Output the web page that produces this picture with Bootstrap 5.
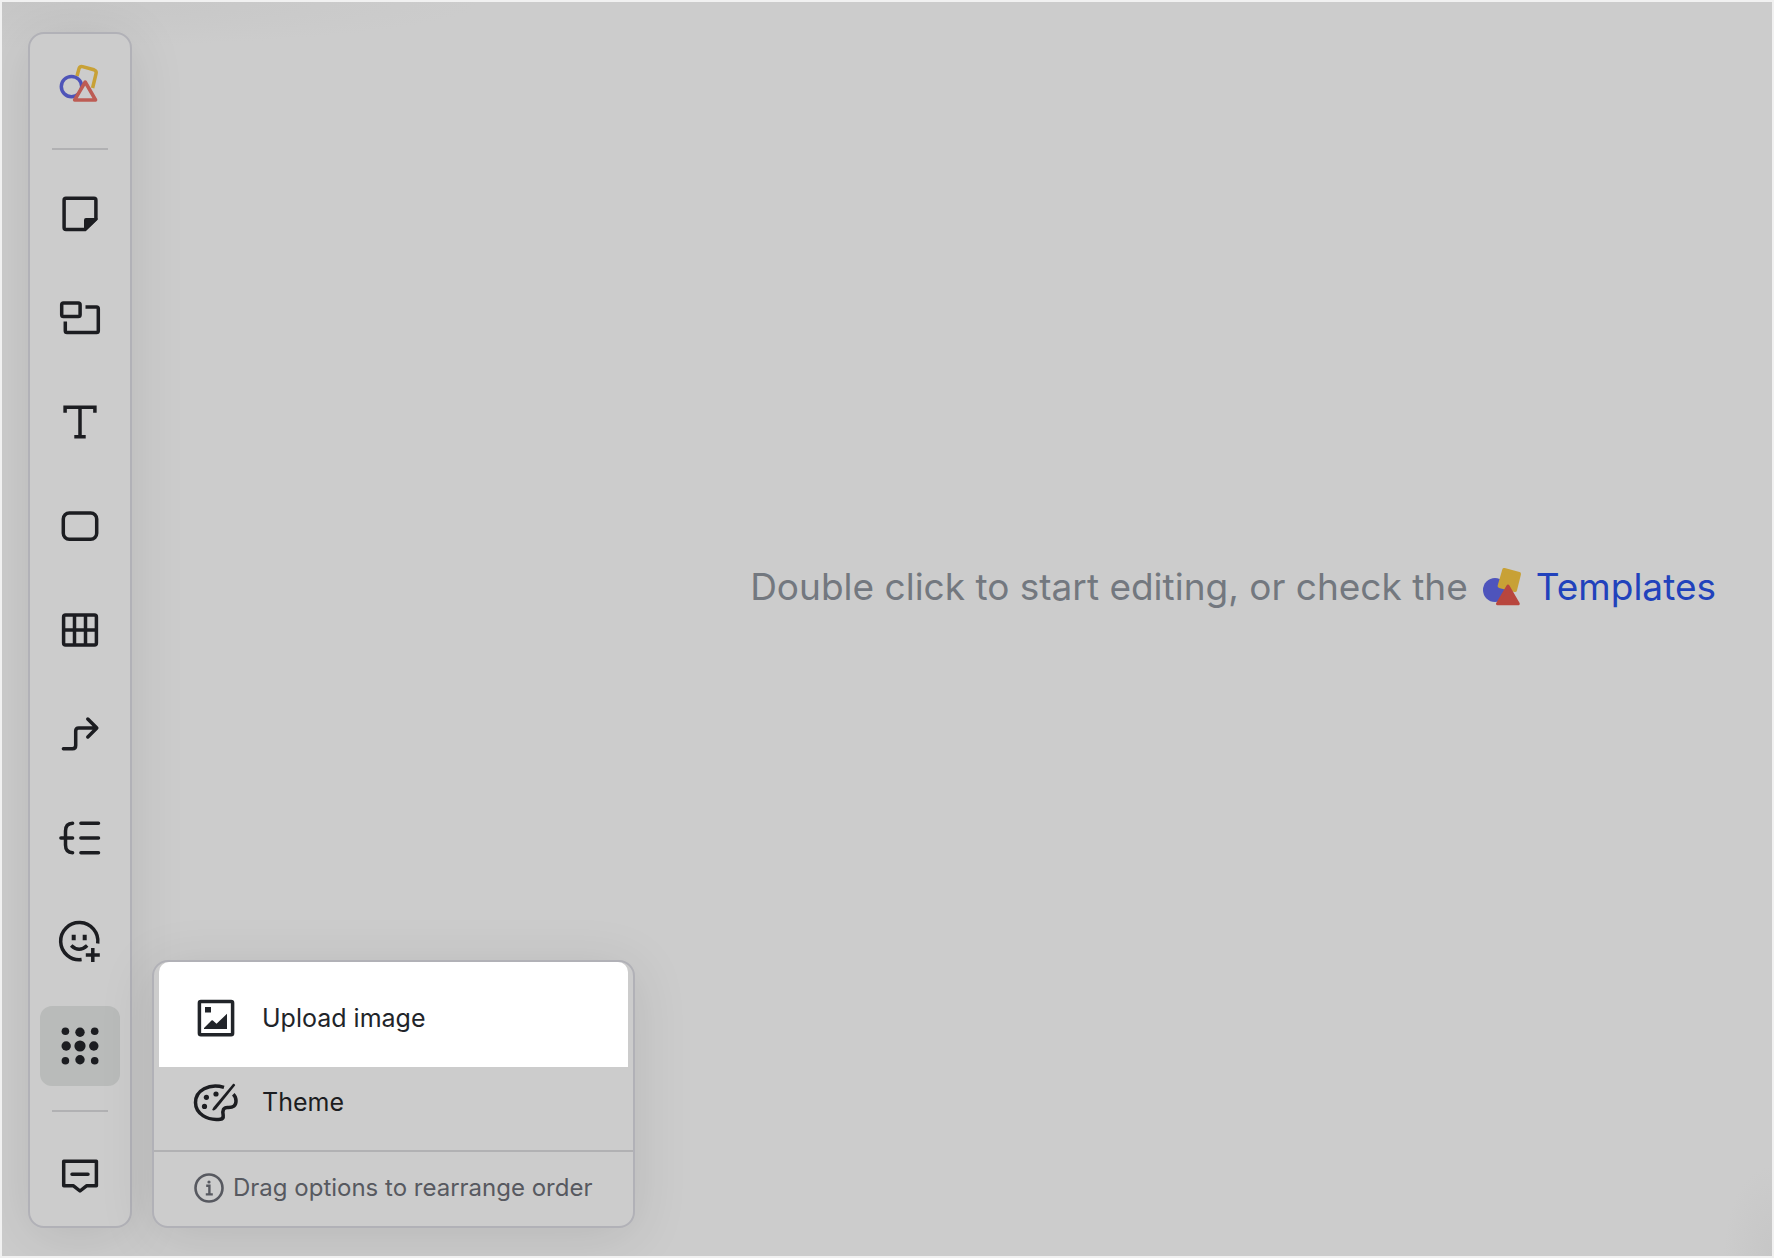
<!DOCTYPE html>
<html lang="en">
<head>
<meta charset="utf-8">
<meta name="viewport" content="width=device-width, initial-scale=1">
<title>Whiteboard</title>
<link href="https://cdn.jsdelivr.net/npm/bootstrap@5.3.0/dist/css/bootstrap.min.css" rel="stylesheet">
<style>
  body { background: #f1f1f1; font-family: Inter, "Liberation Sans", sans-serif; color: #1c1d21; }
  .board {
    min-height: 100vh; border: 2px solid #f1f1f1;
    background:
      radial-gradient(ellipse 48px 90px at 100% 100%, #c6c6c6, transparent) no-repeat,
      radial-gradient(ellipse 480px 46px at 0 0, #c6c6c6, transparent) no-repeat,
      #ccc;
  }
  .rail-wrap { padding: 30px 26px 28px; }
  .rail { width: 104px; padding: 10px 0; gap: 24px; }
  .panel { background: #ccc; border: 2px solid #b1b1b7; border-radius: 16px; box-shadow: 0 8px 56px rgba(0, 0, 0, .1); }
  .tool { width: 80px; height: 80px; border: 0; border-radius: 12px; background: none; color: inherit; }
  .tool.active { background: #b9bbba; }
  .rule { width: 56px; height: 2px; background: #b1b1b3; }
  .ico { width: 44px; height: 44px; fill: none; stroke: currentColor; stroke-width: 3.5; overflow: visible; flex: none; }
  .ico .solid { fill: currentColor; stroke: none; }
  .more-menu { left: 122px; bottom: -2px; width: 483px; }
  .entry { border: 0; background: none; color: inherit; gap: 24px; font-size: 25px; line-height: 32px; }
  .entry-lit { margin: 0 5px; padding: 34px 36px 27px 35px; background: #fff; border-radius: 10px 10px 0 0; color: #212429; }
  .entry-dim { margin: 0 5px; padding: 13px 36px 26px 35px; }
  .tip { border-top: 2px solid #b1b1b3; padding: 20px 40px 22px; gap: 9px; font-size: 24px; line-height: 32px; color: #575960; }
  .tip svg { width: 30px; height: 30px; fill: none; stroke: currentColor; stroke-width: 3; flex: none; }
  .hint { padding: 0 56px 84px 0; font-size: 37px; line-height: 48px; color: #73787f; }
  .hint a { color: #2142bc; gap: 14px; }
  .hint-row { gap: 14px; }
  .hint svg { width: 40px; height: 40px; flex: none; }
</style>
<script src="https://cdn.jsdelivr.net/npm/bootstrap@5.3.0/dist/js/bootstrap.bundle.min.js"></script>
</head>
<body>
<div class="board d-flex overflow-hidden">
  <aside class="rail-wrap">
    <nav class="rail panel d-flex flex-column align-items-center position-relative" aria-label="Tools">
      <button class="tool d-flex align-items-center justify-content-center p-0" type="button" aria-label="Templates">
        <svg class="ico" viewBox="0 0 44 44" stroke-linejoin="round"><path stroke="#c8a136" d="M19 14 21 6.6Q22 4 24.5 4.6L36 7.8Q38.7 8.8 38.1 11.3L34.6 26"/><circle stroke="#4e54b8" cx="13.5" cy="24.6" r="10.2"/><path stroke="#bd5c54" fill="#ccc" d="M27.2 20 37.6 38H16.6z"/></svg>
      </button>
      <div class="rule"></div>
      <button class="tool d-flex align-items-center justify-content-center p-0" type="button" aria-label="Sticky note">
        <svg class="ico" viewBox="0 0 44 44"><path d="M8 6.2H36Q37.9 6.2 37.9 8.2V27L27 37.6H8Q6.1 37.6 6.1 35.6V8.2Q6.1 6.2 8 6.2z"/><path class="solid" d="M26 39V28Q26 26 28 26H39.4V27.5L27.5 39z"/></svg>
      </button>
      <button class="tool d-flex align-items-center justify-content-center p-0" type="button" aria-label="Frame">
        <svg class="ico" viewBox="0 0 44 44"><rect x="3.7" y="7" width="18.4" height="13.6" rx="1.8"/><path d="M27.5 11H38.5Q40.3 11 40.3 12.8V34.7Q40.3 36.5 38.5 36.5H9Q7.3 36.5 7.3 34.7V25.5"/></svg>
      </button>
      <button class="tool d-flex align-items-center justify-content-center p-0" type="button" aria-label="Text">
        <svg class="ico" viewBox="0 0 44 44"><path d="M7.1 12.8V7.3H36.9V12.8M22 7.3V36.6M16.3 36.8H27.7"/></svg>
      </button>
      <button class="tool d-flex align-items-center justify-content-center p-0" type="button" aria-label="Shape">
        <svg class="ico" viewBox="0 0 44 44"><rect x="5.3" y="8.9" width="33.4" height="26.4" rx="6"/></svg>
      </button>
      <button class="tool d-flex align-items-center justify-content-center p-0" type="button" aria-label="Table">
        <svg class="ico" viewBox="0 0 44 44"><rect x="5.6" y="7" width="32.8" height="30" rx="2"/><path d="M16.5 7V37M27.5 7V37M5.5 22H38.5"/></svg>
      </button>
      <button class="tool d-flex align-items-center justify-content-center p-0" type="button" aria-label="Connector">
        <svg class="ico" viewBox="0 0 44 44" stroke-linecap="round" stroke-linejoin="round"><path d="M5.4 36.7H14.5Q17.7 36.7 17.7 33.5V19Q17.7 16 20.8 16H38.6M29.8 7 38.8 16 29.8 25"/></svg>
      </button>
      <button class="tool d-flex align-items-center justify-content-center p-0" type="button" aria-label="Mind map">
        <svg class="ico" viewBox="0 0 44 44" stroke-linecap="round"><path d="M14.6 7.3Q7.5 7.6 7.5 15V29Q7.5 36.4 14.6 36.7M2.9 22H14.6M22.9 7.3H40.5M22.9 22H40.5M22.9 36.7H40.5"/></svg>
      </button>
      <button class="tool d-flex align-items-center justify-content-center p-0" type="button" aria-label="Stickers">
        <svg class="ico" viewBox="0 0 44 44"><path d="M39.7 23.6A18.6 18.6 0 1 0 23.6 39.6M13.2 25.5Q21 33 29.2 25.5M34.8 28V42M27.8 35H41.8"/><path class="solid" d="M13.7 14.8h4v5.4h-4zM24.7 14.8h4v5.4h-4z"/></svg>
      </button>
      <button class="tool active d-flex align-items-center justify-content-center p-0" type="button" aria-label="More" aria-expanded="true">
        <svg class="ico" viewBox="0 0 44 44"><g class="solid"><circle cx="7.4" cy="7.3" r="3.8"/><circle cx="22" cy="8.2" r="4.7"/><circle cx="36.7" cy="7.3" r="3.8"/><circle cx="8.2" cy="22" r="4.7"/><circle cx="22" cy="22" r="5.6"/><circle cx="35.8" cy="22" r="4.7"/><circle cx="7.4" cy="36.7" r="3.8"/><circle cx="22" cy="35.8" r="4.7"/><circle cx="36.7" cy="36.7" r="3.8"/></g></svg>
      </button>
      <div class="rule"></div>
      <button class="tool d-flex align-items-center justify-content-center p-0" type="button" aria-label="Comment">
        <svg class="ico" viewBox="0 0 44 44" stroke-linejoin="round" stroke-linecap="round"><path d="M5.7 7.3H38.4V31.8H28.5L22 37 15.5 31.8H5.7zM14 20.2H30"/></svg>
      </button>

      <div class="more-menu panel position-absolute d-flex flex-column">
        <button class="entry entry-lit d-flex align-items-center text-start" type="button">
          <svg class="ico" viewBox="0 0 44 44"><rect x="5.4" y="5.6" width="33.2" height="33.2" rx="1.5"/><path class="solid" d="M11 11h6v5.5h-6zM10 33V32L17.5 24.4Q18.2 23.9 18.9 24.5L22.5 27.8 33 17.8V33z"/></svg>
          <span>Upload image</span>
        </button>
        <button class="entry entry-dim d-flex align-items-center text-start" type="button">
          <svg class="ico" viewBox="0 0 44 44"><path d="M30 7.4C15 3 1.5 10.5 1.5 22.6 1.5 33.5 13 41 26.5 39.2Q29.6 38.8 29.2 35.4C28.2 30 29.5 27.4 33.4 27.4 39.3 27.8 42 25.5 42 21 42 18.5 41 16 39.3 14.3"/><path class="solid" d="M39.2 3.8Q40.8 3.3 41.2 5.3L22.3 28.8Q20 31.3 18.2 30.1 18.4 28.6 19.7 26.9z"/><g class="solid"><circle cx="12.4" cy="17.3" r="2.6"/><circle cx="22" cy="14" r="2.6"/><circle cx="10.5" cy="26.4" r="2.6"/></g></svg>
          <span>Theme</span>
        </button>
        <div class="tip d-flex align-items-center">
          <svg viewBox="0 0 30 30" aria-hidden="true"><circle cx="15" cy="15" r="13.5" stroke-width="2.6"/><path stroke-width="2.4" d="M12.2 12.8H15.4V21.4M11.8 21.4H18.8"/><circle cx="15" cy="9" r="1.6" fill="currentColor" stroke="none"/></svg>
          <span class="text-nowrap">Drag options to rearrange order</span>
        </div>
      </div>
    </nav>
  </aside>

  <main class="hint flex-grow-1 d-flex flex-column justify-content-center align-items-end">
    <div class="hint-row d-flex align-items-center text-nowrap">
      <span>Double click to start editing, or check the</span>
      <a href="#" class="d-flex align-items-center text-decoration-none">
        <svg viewBox="0 0 40 40" aria-hidden="true"><circle cx="13" cy="23" r="12" fill="#4e54bc"/><path fill="#c8a136" stroke="#c8a136" stroke-width="4" stroke-linejoin="round" d="M22.2 3 37 7 33 23 17.6 19z"/><path fill="#b8463e" stroke="#b8463e" stroke-width="3" stroke-linejoin="round" d="M26 19 36.3 36.7H15.5z"/></svg>
        <span>Templates</span>
      </a>
    </div>
  </main>
</div>
</body>
</html>
